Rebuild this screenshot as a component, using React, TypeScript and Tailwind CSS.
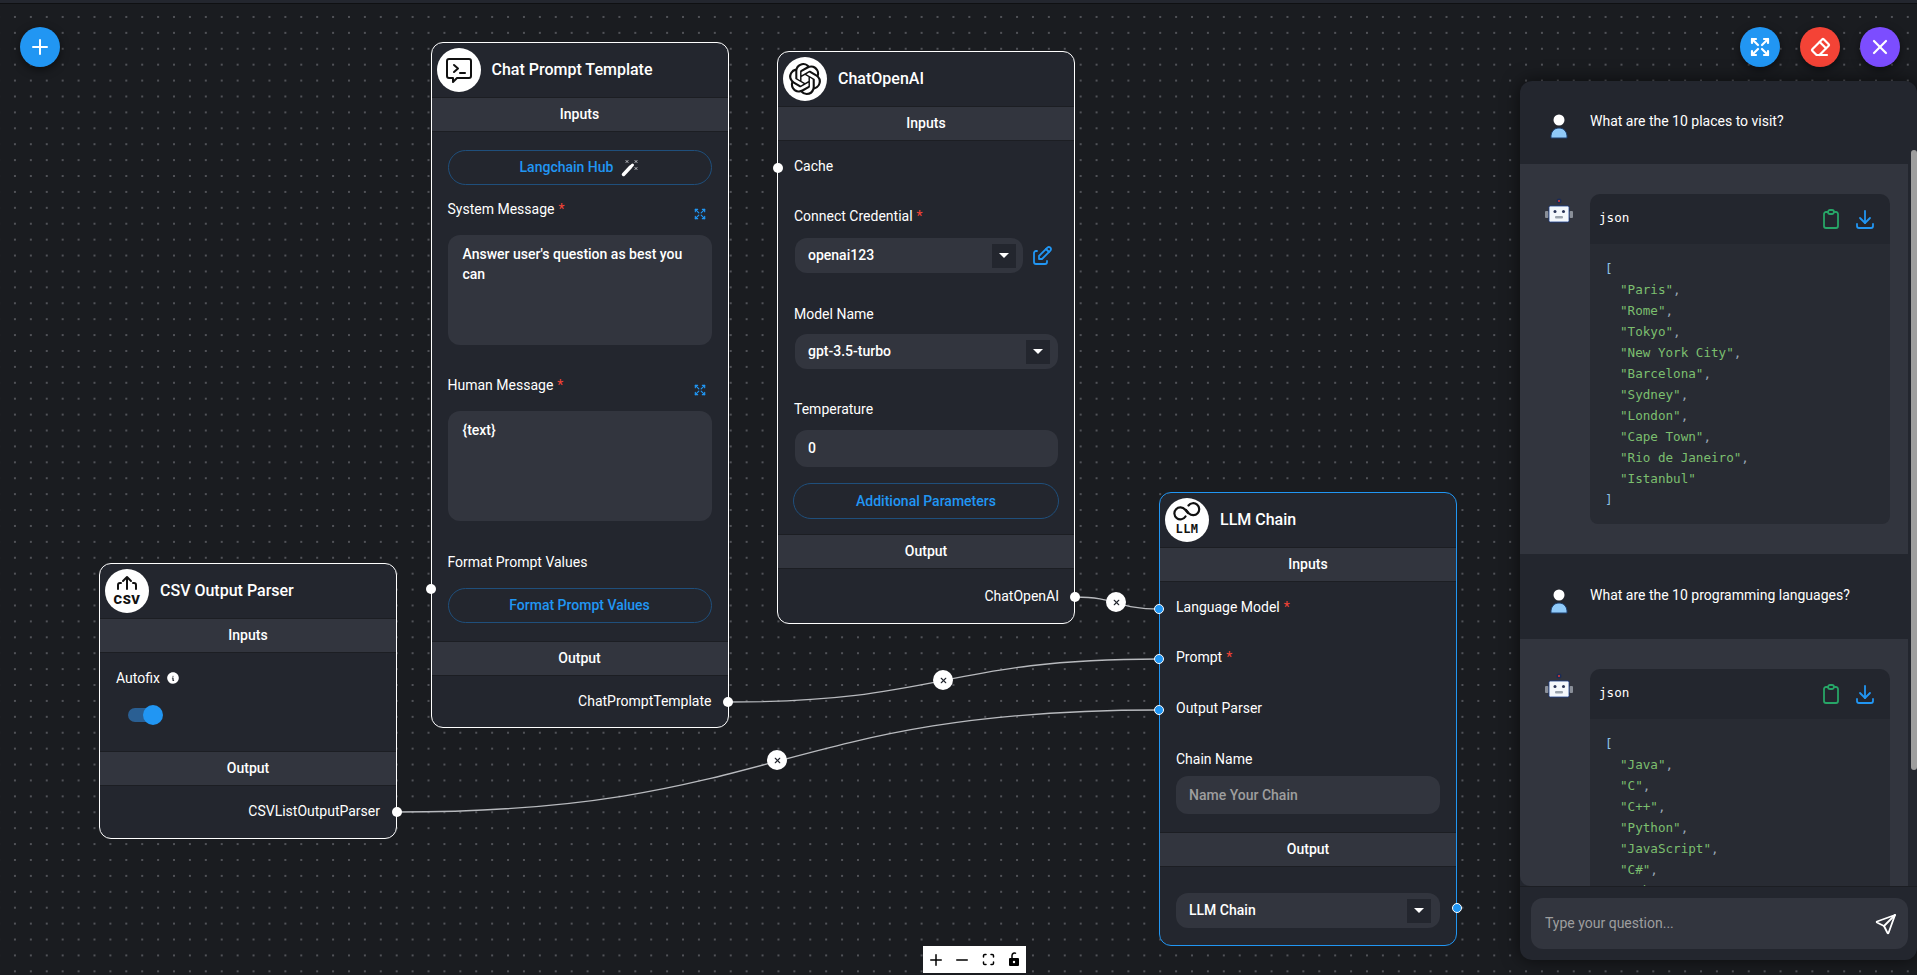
import { ReactNode } from 'react'
import { SiOpenai } from 'react-icons/si'
import {
  TbArrowsMaximize,
  TbClipboard,
  TbDownload,
  TbEdit,
  TbEraser,
  TbInfoCircleFilled,
  TbMaximize,
  TbMinus,
  TbPlus,
  TbSend,
  TbX,
} from 'react-icons/tb'

const places = ['Paris', 'Rome', 'Tokyo', 'New York City', 'Barcelona', 'Sydney', 'London', 'Cape Town', 'Rio de Janeiro', 'Istanbul']
const languages = ['Java', 'C', 'C++', 'Python', 'JavaScript', 'C#', 'Ruby']

function Section({ title }: { title: string }) {
  return (
    <div className="flex h-[35px] items-center justify-center border-y border-[#1c1e23] bg-[#32353e] text-[14px] font-medium text-white">
      {title}
    </div>
  )
}

function Label({ text, required, className = '' }: { text: string; required?: boolean; className?: string }) {
  return (
    <div className={`h-[20px] text-[14px] leading-[20px] text-white ${className}`}>
      {text}
      {required && <span className="ml-[4px] text-[#f44336]">*</span>}
    </div>
  )
}

function NodeHeader({ icon, title }: { icon: ReactNode; title: string }) {
  return (
    <div className="flex h-[54px] items-center pl-[5px]">
      <div className="flex h-[44px] w-[44px] items-center justify-center rounded-full bg-white">{icon}</div>
      <div className="ml-[11px] text-[16px] font-medium text-white">{title}</div>
    </div>
  )
}

function SelectBox({ value, className = '' }: { value: string; className?: string }) {
  return (
    <div className={`flex items-center justify-between rounded-[12px] bg-[#32353e] pl-[13px] text-[14px] font-medium text-white ${className}`}>
      <span>{value}</span>
      <span className="flex h-[24px] w-[24px] items-center justify-center bg-[#23262e]">
        <span className="h-0 w-0 border-x-[5px] border-t-[5px] border-x-transparent border-t-white" />
      </span>
    </div>
  )
}

function OutlineButton({ children, className = '' }: { children: ReactNode; className?: string }) {
  return (
    <div className={`flex items-center justify-center rounded-full border border-[#1f4f7c] text-[14px] font-medium text-[#2196f3] ${className}`}>
      {children}
    </div>
  )
}

function Handle({ className }: { className: string }) {
  return <div className={`absolute h-[10px] w-[10px] rounded-full bg-white ${className}`} />
}

function BlueHandle({ className }: { className: string }) {
  return <div className={`absolute h-[10px] w-[10px] rounded-full border border-white bg-[#2196f3] ${className}`} />
}

function EdgeButton({ className }: { className: string }) {
  return (
    <div className={`absolute flex h-[20px] w-[20px] items-center justify-center rounded-full bg-white text-[#23262e] ${className}`}>
      <TbX size={9} strokeWidth={3} />
    </div>
  )
}

function ChatPromptIcon() {
  return (
    <svg width="30" height="30" viewBox="0 0 30 30" fill="none" stroke="#111" strokeWidth="2" strokeLinecap="round" strokeLinejoin="round">
      <path d="M5 4h20a2 2 0 0 1 2 2v15a2 2 0 0 1-2 2H13l-4 4v-4H5a2 2 0 0 1-2-2V6a2 2 0 0 1 2-2z" />
      <path d="M10 10l4 3.5-4 3.5" />
      <path d="M16 18h5" />
    </svg>
  )
}

function CsvIcon() {
  return (
    <svg width="36" height="36" viewBox="0 0 36 36" fill="none" stroke="#111" strokeWidth="2" strokeLinecap="round" strokeLinejoin="round">
      <path d="M18 16V4M14 8l4-4 4 4" />
      <path d="M9 16v-4a2 2 0 0 1 2-2h1M27 16v-4a2 2 0 0 0-2-2h-1" />
      <text x="18" y="31" textAnchor="middle" fill="#111" stroke="none" fontFamily="Roboto, sans-serif" fontSize="13" fontWeight="900" letterSpacing="0.5">CSV</text>
    </svg>
  )
}

function LlmIcon() {
  return (
    <svg width="36" height="36" viewBox="0 0 36 36" fill="none" stroke="#111" strokeWidth="2.200" strokeLinecap="round">
      <path d="M16.500 14.500A6 6 0 1 1 16 7.500L19 11" />
      <path d="M19.500 3.500A6 6 0 1 1 20 11.500L17 8" />
      <text x="18" y="31" textAnchor="middle" fill="#111" stroke="none" fontFamily="'DejaVu Sans Mono', monospace" fontSize="12" fontWeight="700" letterSpacing="0.5">LLM</text>
    </svg>
  )
}

function WandIcon() {
  return (
    <svg width="18" height="18" viewBox="0 0 18 18" fill="none" strokeLinecap="round" className="ml-[8px]">
      <path d="M2.500 15.500L9.500 8" stroke="#fff" strokeWidth="3.500" />
      <path d="M10 7.500L11.500 6" stroke="#fff" strokeWidth="3" />
      <path d="M5 1.500l2 2M7 1.500l-2 2M14 1.500l2 2M16 1.500l-2 2M14 8.500l2 2M16 8.500l-2 2" stroke="#c4c6ca" strokeWidth="1" />
    </svg>
  )
}

function UserAvatar() {
  return (
    <svg width="30" height="30" viewBox="0 0 30 30" className="shrink-0">
      <circle cx="15" cy="10" r="5.500" fill="#fff" />
      <path d="M7 28c-.5-6 3-10 8-10s8.500 4 8 10z" fill="#90caf9" stroke="#1c3f6e" strokeWidth="1" />
    </svg>
  )
}

function BotAvatar() {
  return (
    <svg width="30" height="30" viewBox="0 0 30 30" className="mt-[3px] shrink-0">
      <circle cx="15" cy="4" r="2.500" fill="#1c2c55" />
      <circle cx="15" cy="4" r="1" fill="#e53935" />
      <rect x="1" y="14" width="3.500" height="7" rx="1" fill="#8a8f98" />
      <rect x="25.500" y="14" width="3.500" height="7" rx="1" fill="#8a8f98" />
      <rect x="5" y="9" width="20" height="16" rx="1.500" fill="#f4f8fc" stroke="#1c3f8e" strokeWidth="0.800" />
      <circle cx="11" cy="14.500" r="1.500" fill="#2a3558" />
      <circle cx="19.500" cy="14.500" r="1.500" fill="#2a3558" />
      <rect x="11" y="19" width="8" height="2.500" rx="1" fill="#9aa3ad" />
    </svg>
  )
}

function CodeBlock({ items, className = '' }: { items: string[]; className?: string }) {
  return (
    <div className={`w-[300px] font-['DejaVu_Sans_Mono',monospace] text-[12.6px] leading-[21px] ${className}`}>
      <div className="flex h-[50px] items-center justify-between rounded-t-[10px] bg-[#23262e] pl-[9px] pr-[13px] text-white">
        <span className="pb-[3px]">json</span>
        <div className="flex items-center gap-[10px]">
          <TbClipboard size={24} strokeWidth={1.8} className="text-[#27a567]" />
          <TbDownload size={24} strokeWidth={1.8} className="text-[#2196f3]" />
        </div>
      </div>
      <div className="rounded-b-[8px] bg-[#282b33] px-[15px] py-[14px]">
        <div className="text-[#8ec3e6]">[</div>
        {items.map((item, i) => (
          <div key={item} className="pl-[15px] text-[#7cbf6f]">
            "{item}"{i < items.length - 1 && <span className="text-[#9aa7b5]">,</span>}
          </div>
        ))}
        <div className="text-[#8ec3e6]">]</div>
      </div>
    </div>
  )
}

function ChatPanel() {
  return (
    <div className="absolute left-[1520px] top-[77px] flex h-[879px] w-[397px] flex-col overflow-hidden rounded-[12px] bg-[#23262e] shadow-[0_0_18px_rgba(0,0,0,0.6)]">
      <div className="absolute right-0 top-[69px] h-[620px] w-[6px] rounded-[3px] bg-[#9e9e9e]" />
      <div className="h-[805px] w-[388px] overflow-hidden">
        <div className="flex h-[83px] items-start gap-[16px] pl-[24px] pt-[29px]">
          <UserAvatar />
          <div className="pt-[1px] text-[14px] leading-[20px] text-white">What are the 10 places to visit?</div>
        </div>
        <div className="flex h-[390px] items-start gap-[16px] bg-[#32353e] pl-[24px] pt-[30px]">
          <BotAvatar />
          <CodeBlock items={places} />
        </div>
        <div className="flex h-[85px] items-start gap-[16px] pl-[24px] pt-[31px]">
          <UserAvatar />
          <div className="text-[14px] leading-[20px] text-white">What are the 10 programming languages?</div>
        </div>
        <div className="flex h-[247px] items-start gap-[16px] overflow-hidden rounded-bl-[10px] bg-[#32353e] pl-[24px] pt-[30px]">
          <BotAvatar />
          <CodeBlock items={languages} />
        </div>
      </div>
      <div className="mt-0 border-t border-[#1c1e23] pl-[11px] pr-[9px] pt-[11px]">
        <div className="flex h-[51px] items-center justify-between rounded-[12px] bg-[#32353e] pl-[14px] pr-[10px] text-[14px] text-[#9e9e9e]">
          <span>Type your question...</span>
          <TbSend size={24} strokeWidth={1.8} className="text-white" />
        </div>
      </div>
    </div>
  )
}

export default function App() {
  return (
    <div className="flex h-screen w-screen flex-col overflow-hidden bg-[#191b1f] font-['Roboto',sans-serif]">
      <div className="h-[4px] shrink-0 border-b border-[#0f1012] bg-[#23262e]" />
      <div className="relative flex-1 bg-[#1a1c20] bg-[radial-gradient(circle,#77787e_0.6px,transparent_0.85px)] bg-[size:15.92px_15.92px] bg-[position:7px_5px]">
        {/* edges */}
        <svg className="absolute left-0 top-[-4px] h-[975px] w-[1917px]" fill="none" stroke="#b8babe" strokeWidth="1.300">
          <path d="M1075 597C1117 597 1117 609 1159 609" />
          <path d="M728 702C943 702 943 659 1159 659" />
          <path d="M397 812C778 812 778 710 1159 710" />
        </svg>
        <EdgeButton className="left-[1106px] top-[588px]" />
        <EdgeButton className="left-[933px] top-[666px]" />
        <EdgeButton className="left-[767px] top-[746px]" />

        {/* Chat Prompt Template */}
        <div className="absolute left-[430.5px] top-[38px] w-[298px] rounded-[12px] border border-white bg-[#23262e]">
          <Handle className="left-[-6px] top-[541px]" />
          <Handle className="right-[-5px] top-[654px]" />
          <NodeHeader icon={<ChatPromptIcon />} title="Chat Prompt Template" />
          <Section title="Inputs" />
          <div className="px-[16px]">
            <OutlineButton className="mt-[18px] h-[35px]">
              Langchain Hub
              <WandIcon />
            </OutlineButton>
            <div className="mt-[14px] flex h-[20px] items-start justify-between">
              <Label text="System Message" required />
              <TbArrowsMaximize size={14} className="mr-[5px] mt-[8px] text-[#2196f3]" />
            </div>
            <div className="mt-[16px] h-[110px] rounded-[12px] bg-[#32353e] px-[15px] pt-[9px] text-[14px] font-medium leading-[20px] text-white">
              Answer user's question as best you can
            </div>
            <div className="mt-[30px] flex h-[20px] items-start justify-between">
              <Label text="Human Message" required />
              <TbArrowsMaximize size={14} className="mr-[5px] mt-[8px] text-[#2196f3]" />
            </div>
            <div className="mt-[16px] h-[110px] rounded-[12px] bg-[#32353e] px-[15px] pt-[9px] text-[14px] font-medium leading-[20px] text-white">
              {'{text}'}
            </div>
            <Label text="Format Prompt Values" className="mt-[31px]" />
            <OutlineButton className="mt-[16px] h-[35px]">Format Prompt Values</OutlineButton>
          </div>
          <div className="mt-[18px]">
            <Section title="Output" />
          </div>
          <div className="px-[16px] pb-[16px] pt-[15px] text-right">
            <Label text="ChatPromptTemplate" />
          </div>
        </div>

        {/* ChatOpenAI */}
        <div className="absolute left-[777px] top-[47px] w-[298px] rounded-[12px] border border-white bg-[#23262e]">
          <Handle className="left-[-5px] top-[111px]" />
          <Handle className="right-[-6px] top-[540px]" />
          <NodeHeader icon={<SiOpenai size={32} className="text-[#111]" />} title="ChatOpenAI" />
          <Section title="Inputs" />
          <div className="px-[16px]">
            <Label text="Cache" className="mt-[15px]" />
            <Label text="Connect Credential" required className="mt-[30px]" />
            <div className="ml-[1px] mt-[12px] flex items-center gap-[7px]">
              <SelectBox value="openai123" className="h-[35px] w-[228px] pr-[7px]" />
              <TbEdit size={24} strokeWidth={1.8} className="text-[#2196f3]" />
            </div>
            <Label text="Model Name" className="mt-[31px]" />
            <SelectBox value="gpt-3.5-turbo" className="ml-[1px] mt-[10px] h-[35px] pr-[8px]" />
            <Label text="Temperature" className="mt-[30px]" />
            <div className="ml-[1px] mt-[11px] flex h-[37px] items-center rounded-[12px] bg-[#32353e] pl-[13px] text-[14px] font-medium text-white">0</div>
            <OutlineButton className="-mx-[1px] mt-[16px] h-[36px]">Additional Parameters</OutlineButton>
          </div>
          <div className="mt-[15px]">
            <Section title="Output" />
          </div>
          <div className="pb-[17px] pl-[16px] pr-[15px] pt-[17px] text-right">
            <Label text="ChatOpenAI" />
          </div>
        </div>

        {/* CSV Output Parser */}
        <div className="absolute left-[99px] top-[559px] w-[298px] rounded-[12px] border border-white bg-[#23262e]">
          <Handle className="right-[-6px] top-[243px]" />
          <NodeHeader icon={<CsvIcon />} title="CSV Output Parser" />
          <Section title="Inputs" />
          <div className="px-[16px]">
            <div className="mt-[15px] flex h-[20px] items-center gap-[6px]">
              <Label text="Autofix" />
              <TbInfoCircleFilled size={14} className="text-white" />
            </div>
            <div className="relative ml-[12px] mt-[20px] h-[14px] w-[34px] rounded-full bg-[#2a5f93]">
              <div className="absolute right-[-1px] top-[-3px] h-[20px] w-[20px] rounded-full bg-[#2196f3]" />
            </div>
          </div>
          <div className="mt-[29px]">
            <Section title="Output" />
          </div>
          <div className="px-[16px] pb-[17px] pt-[15px] text-right">
            <Label text="CSVListOutputParser" />
          </div>
        </div>

        {/* LLM Chain */}
        <div className="absolute left-[1159px] top-[488px] w-[298px] rounded-[12px] border border-[#2196f3] bg-[#23262e]">
          <BlueHandle className="left-[-6px] top-[111px]" />
          <BlueHandle className="left-[-6px] top-[161px]" />
          <BlueHandle className="left-[-6px] top-[212px]" />
          <BlueHandle className="right-[-6px] top-[410px]" />
          <NodeHeader icon={<LlmIcon />} title="LLM Chain" />
          <Section title="Inputs" />
          <div className="px-[16px]">
            <Label text="Language Model" required className="mt-[15px]" />
            <Label text="Prompt" required className="mt-[30px]" />
            <Label text="Output Parser" className="mt-[31px]" />
            <Label text="Chain Name" className="mt-[31px]" />
            <div className="mt-[7px] flex h-[38px] items-center rounded-[12px] bg-[#32353e] pl-[13px] text-[14px] font-medium text-[#9e9e9e]">
              Name Your Chain
            </div>
          </div>
          <div className="mt-[18px]">
            <Section title="Output" />
          </div>
          <div className="pb-[17px] pl-[16px] pr-[16px] pt-[26px]">
            <SelectBox value="LLM Chain" className="h-[35px] pr-[9px]" />
          </div>
        </div>

        {/* canvas buttons */}
        <div className="absolute left-[20px] top-[23px] flex h-[40px] w-[40px] items-center justify-center rounded-full bg-[#2196f3] text-white shadow-[0_3px_8px_rgba(0,0,0,0.5)]">
          <TbPlus size={24} />
        </div>
        <div className="absolute left-[1740px] top-[23px] flex gap-[20px]">
          <div className="flex h-[40px] w-[40px] items-center justify-center rounded-full bg-[#2196f3] text-white shadow-[0_3px_8px_rgba(0,0,0,0.5)]">
            <TbArrowsMaximize size={24} strokeWidth={2.2} />
          </div>
          <div className="flex h-[40px] w-[40px] items-center justify-center rounded-full bg-[#f44336] text-white shadow-[0_3px_8px_rgba(0,0,0,0.5)]">
            <TbEraser size={24} strokeWidth={2.2} />
          </div>
          <div className="flex h-[40px] w-[40px] items-center justify-center rounded-full bg-[#7c4dff] text-white shadow-[0_3px_8px_rgba(0,0,0,0.5)]">
            <TbX size={24} strokeWidth={2.2} />
          </div>
        </div>

        {/* zoom controls */}
        <div className="absolute left-[923px] top-[942px] grid h-[27px] w-[103px] grid-cols-[repeat(4,26px)] items-center justify-items-center bg-white text-black">
          <TbPlus size={18} />
          <TbMinus size={18} />
          <TbMaximize size={15} strokeWidth={2.4} />
          <svg width="12" height="15" viewBox="0 0 12 15">
            <path d="M2 6h8a1 1 0 0 1 1 1v6a1 1 0 0 1-1 1H2a1 1 0 0 1-1-1V7a1 1 0 0 1 1-1z" fill="#000" />
            <path d="M4 6V3.500A2.500 2.500 0 0 1 8 1.500" fill="none" stroke="#000" strokeWidth="1.500" />
            <circle cx="6" cy="10" r="1.200" fill="#fff" />
          </svg>
        </div>

        <ChatPanel />
      </div>
    </div>
  )
}
